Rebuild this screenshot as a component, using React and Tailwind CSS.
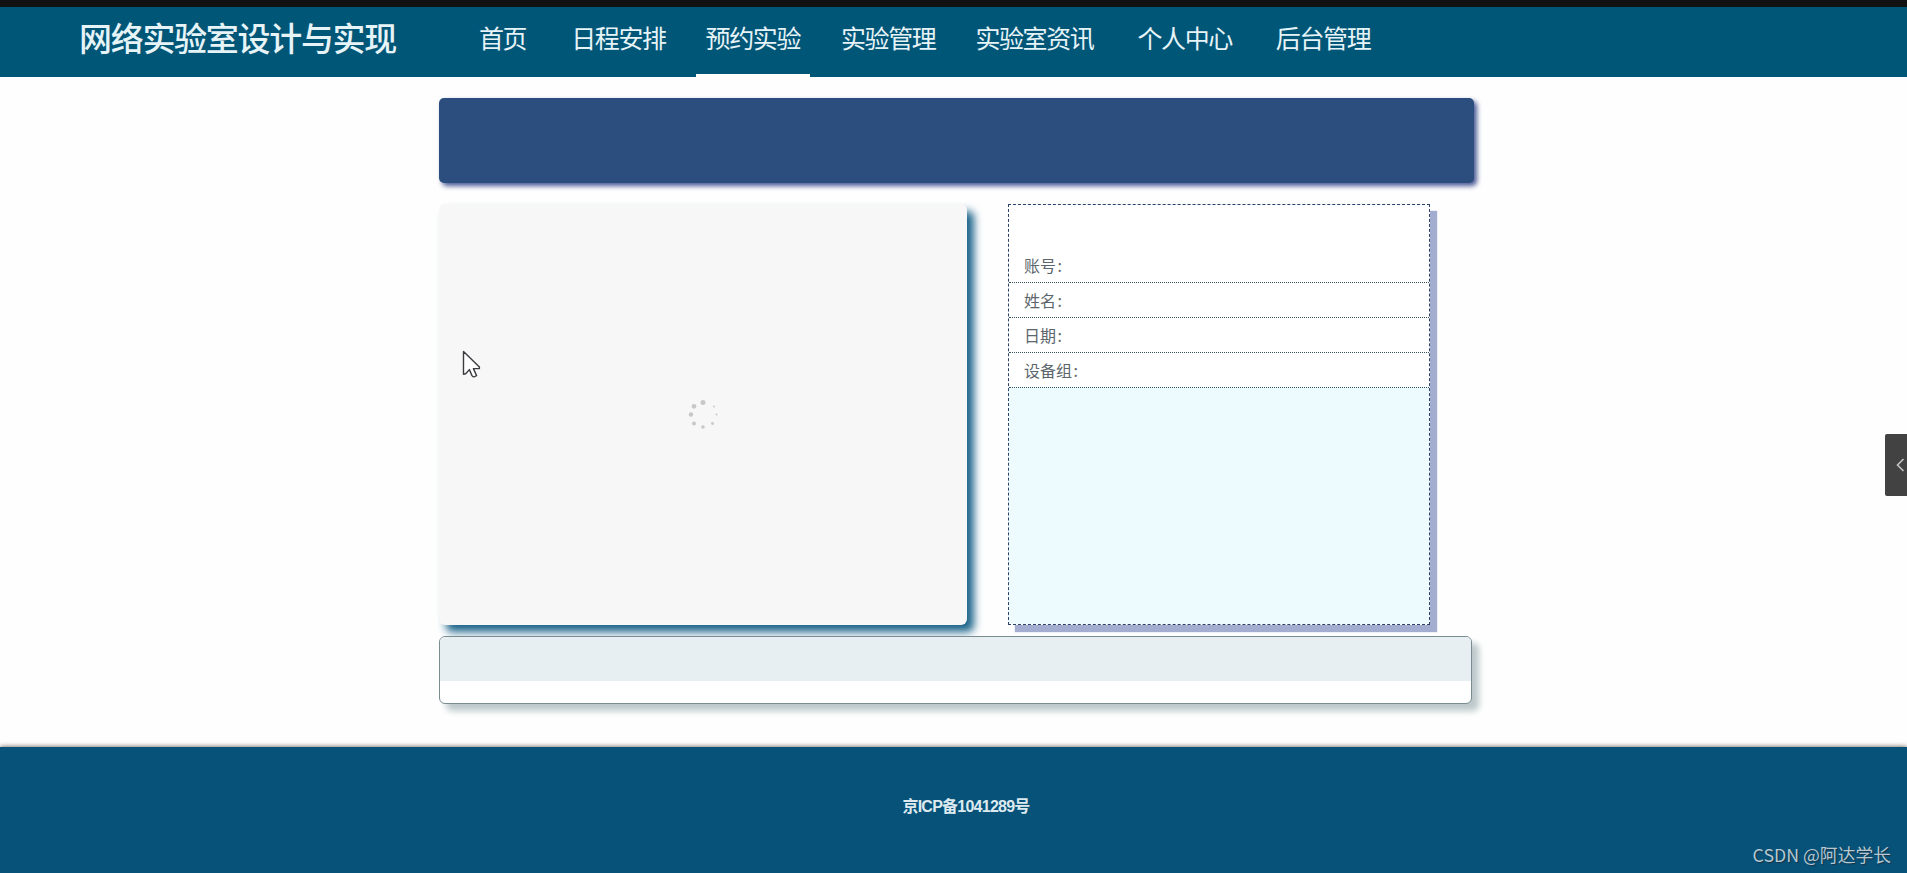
import React, { useState } from "react";

const cjk = "font-['Noto_Sans_CJK_SC',sans-serif]";

const navItems = [
  { name: "首页", gap: "mr-[25px]" },
  { name: "日程安排", gap: "mr-[20px]" },
  { name: "预约实验", gap: "mr-[21px]" },
  { name: "实验管理", gap: "mr-[20px]" },
  { name: "实验室资讯", gap: "mr-[24px]" },
  { name: "个人中心", gap: "mr-[24px]" },
  { name: "后台管理", gap: "" },
];

const fields = ["账号", "姓名", "日期", "设备组"];

// loading dots, clockwise from the top
const dots = [
  { x: 15, y: 3.5, r: 2.5 },
  { x: 26, y: 7.5, r: 0.9 },
  { x: 28.5, y: 15.5, r: 1 },
  { x: 24.5, y: 24.5, r: 1.4 },
  { x: 15, y: 28, r: 1.8 },
  { x: 6, y: 24.5, r: 2 },
  { x: 3, y: 15.5, r: 2.2 },
  { x: 6, y: 7.3, r: 2.4 },
];

const Header = ({ active, setActive }) => (
  <header className="flex h-[77px] border-t-[7px] border-[#111] bg-[#005677] text-[#e6f3f7]">
    <h1 className="ml-[79px] w-[390px] text-[33px] leading-[60px] tracking-[-1.3px] font-medium whitespace-nowrap">
      网络实验室设计与实现
    </h1>
    <nav className="flex">
      {navItems.map((item) => (
        <button
          key={item.name}
          onClick={() => setActive(item.name)}
          className={`h-[70px] px-[10px] pb-[5px] text-[25px] tracking-[-1.4px] whitespace-nowrap border-b-[3px] ${item.gap} ${
            active === item.name ? "border-white" : "border-transparent"
          }`}
        >
          {item.name}
        </button>
      ))}
    </nav>
  </header>
);

const Spinner = () => (
  <svg className="w-[31px] h-[31px]" viewBox="0 0 31 31" fill="#c8c8c8">
    {dots.map((d, i) => (
      <circle key={i} cx={d.x} cy={d.y} r={d.r} />
    ))}
  </svg>
);

const Pointer = () => (
  <svg
    className="absolute left-[23px] top-[146px] w-[20px] h-[30px]"
    viewBox="0 0 20 30"
    fill="#fff"
    stroke="#3c3c40"
    strokeWidth="1.4"
    strokeLinejoin="round"
  >
    <path d="M1.5 1.5V24.3L3.6 23.8L7.4 19.6L10 25.6Q11.8 28.2 14.6 25.6L11.4 18.6H17.4V17Z" />
  </svg>
);

const App = () => {
  const [active, setActive] = useState("预约实验");

  return (
    <div className={`relative flex flex-col h-[873px] overflow-hidden bg-[#fefefe] ${cjk}`}>
      <Header active={active} setActive={setActive} />

      <main className="w-[1035px] h-[670px] ml-[439px] pt-[21px]">
        <div className="h-[85px] rounded-[5px] bg-[#2b4e7e] shadow-[3px_3px_5px_#4a5a96]"></div>

        <div className="flex mt-[21px]">
          <div className="relative flex items-center justify-center w-[528px] h-[421px] rounded-[6px] bg-[#f7f7f7] shadow-[7px_7px_8px_#1c648a]">
            <Spinner />
            <Pointer />
          </div>

          <div className="w-[422px] h-[421px] ml-[41px] pt-[43px] border border-dashed border-[#2c4068] shadow-[7px_7px_1px_#a2adcf] bg-[linear-gradient(#fff_182px,#edfbff_182px)]">
            {fields.map((label) => (
              <div
                key={label}
                className="h-[35px] pl-[15px] border-b border-dotted border-[#33505f] text-[16px] leading-[35px] text-[#5c666c]"
              >
                {label}
                <span className="ml-[1.5px]">:</span>
              </div>
            ))}
          </div>
        </div>

        <div className="relative w-[1033px] h-[68px] mt-[11px] rounded-[6px] border border-[#788c92] bg-white shadow-[7px_7px_6px_#bcc8ca] overflow-hidden">
          <div className="h-[44px] bg-[#e7eff3]"></div>
        </div>
      </main>

      <footer className="relative flex-1 bg-[#075279] text-center shadow-[0_0_5px_#5c4c40]">
        <p className="pt-[50px] pl-[25px] font-['Liberation_Sans','Noto_Sans_CJK_SC',sans-serif] text-[16px] leading-[20px] font-semibold tracking-[-0.75px] text-[#dceaf0]">
          京ICP备1041289号
        </p>
        <span className="absolute right-[16px] bottom-[6px] text-[17.8px] leading-[26px] text-[#b3c8d3] [text-shadow:1px_1px_1px_#1c3346]">
          CSDN @阿达学长
        </span>
      </footer>

      <button className="absolute right-0 top-[434px] w-[22px] h-[62px] rounded-l-[2px] bg-[#424242]">
        <svg className="w-[10px] h-[16px] ml-[10px]" viewBox="0 0 10 16" fill="none" stroke="#c4c4c4" strokeWidth="1.6">
          <path d="M8.5 2L2.5 8L8.5 14" />
        </svg>
      </button>
    </div>
  );
};

export default App;
